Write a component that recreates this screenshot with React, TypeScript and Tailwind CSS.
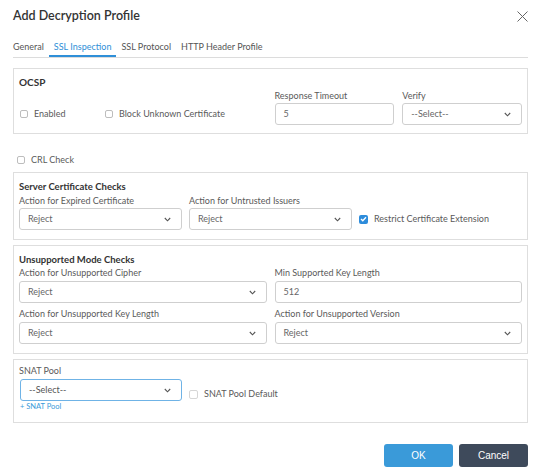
import React from "react";

const Chevron = () => (
  <svg width="7" height="5" viewBox="0 0 7 5" fill="none">
    <path d="M0.8 1 L3.5 3.8 L6.2 1" stroke="#555" strokeWidth="1.1" />
  </svg>
);

const Box = ({ checked = false, light = false }: { checked?: boolean; light?: boolean }) =>
  checked ? (
    <span className="flex h-[9px] w-[9px] items-center justify-center rounded-[2px] bg-[#2d8cdb]">
      <svg width="7" height="6" viewBox="0 0 7 6" fill="none">
        <path d="M1 3 L2.8 4.8 L6 1.2" stroke="#fff" strokeWidth="1.3" />
      </svg>
    </span>
  ) : (
    <span
      className={
        light
          ? "block h-[9px] w-[9px] rounded-[2px] border border-[#d6d6d6] bg-white"
          : "block h-[8px] w-[8px] rounded-[2px] border border-[#bdbdbd] bg-white"
      }
    />
  );

const Label = ({ children }: { children: React.ReactNode }) => (
  <div className="text-[9px] leading-[12px] text-[#5a5a5a]">{children}</div>
);

const Select = ({ value, focus = false }: { value: string; focus?: boolean }) => (
  <div
    className={
      focus
        ? "flex h-[22px] items-center justify-between rounded-[3px] border border-[#6fb3e6] pl-[8px] pr-[10px] text-[9px] text-[#555]"
        : "flex h-[22px] items-center justify-between rounded-[3px] border border-[#cfcfcf] pl-[8px] pr-[10px] text-[9px] text-[#666]"
    }
  >
    <span>{value}</span>
    <Chevron />
  </div>
);

const Input = ({ value }: { value: string }) => (
  <div className="flex h-[22px] items-center rounded-[3px] border border-[#cfcfcf] pl-[8px] text-[9px] text-[#666]">
    {value}
  </div>
);

const Check = ({ label, checked = false, light = false }: { label: string; checked?: boolean; light?: boolean }) => (
  <div className="flex items-center gap-[6px] text-[9px] leading-[12px] text-[#5a5a5a]">
    <Box checked={checked} light={light} />
    <span>{label}</span>
  </div>
);

export default function App() {
  return (
    <div
      className="h-[476px] w-[540px] bg-white pl-[13px] pr-[12px]"
      style={{ fontFamily: "Lato, 'Open Sans', sans-serif" }}
    >
      {/* header */}
      <div className="flex h-[32px] items-center justify-between">
        <div className="text-[12.5px] font-semibold text-[#333]">Add Decryption Profile</div>
        <svg width="11" height="11" viewBox="0 0 11 11" fill="none">
          <path d="M0.5 0.5 L10.5 10.5 M10.5 0.5 L0.5 10.5" stroke="#666" strokeWidth="1" />
        </svg>
      </div>

      {/* tabs */}
      <div className="mt-[6px] flex border-b border-[#dcdcdc] text-[9px] text-[#555]">
        <div className="flex h-[19px] items-center border-b-2 border-transparent pr-[5px]">General</div>
        <div className="flex h-[19px] items-center border-b-2 border-[#2f8fd8] px-[5px] text-[#2f8fd8]">
          SSL Inspection
        </div>
        <div className="flex h-[19px] items-center border-b-2 border-transparent px-[5px]">SSL Protocol</div>
        <div className="flex h-[19px] items-center border-b-2 border-transparent px-[5px]">HTTP Header Profile</div>
      </div>

      {/* OCSP */}
      <div className="mt-[10px] border border-[#dedede] px-[5px] pb-[8px] pt-[7px]">
        <div className="text-[10px] font-bold leading-[12px] text-[#333]">OCSP</div>
        <div className="mt-[2px] grid grid-cols-2 gap-x-[8px]">
          <div className="flex items-end">
            <div className="flex h-[22px] items-center pl-[1px]">
              <div className="w-[85px]">
                <Check label="Enabled" />
              </div>
              <Check label="Block Unknown Certificate" />
            </div>
          </div>
          <div className="grid grid-cols-2 gap-x-[8px]">
            <div>
              <Label>Response Timeout</Label>
              <div className="mt-[1px]">
                <Input value="5" />
              </div>
            </div>
            <div>
              <Label>Verify</Label>
              <div className="mt-[1px]">
                <Select value="--Select--" />
              </div>
            </div>
          </div>
        </div>
      </div>

      {/* CRL */}
      <div className="mt-[20px] pl-[4px]">
        <Check label="CRL Check" />
      </div>

      {/* Server Certificate Checks */}
      <div className="mt-[6px] border border-[#dedede] px-[5px] pb-[9px] pt-[8px]">
        <div className="text-[9.5px] font-bold leading-[12px] text-[#333]">Server Certificate Checks</div>
        <div className="mt-[2px] grid grid-cols-3 gap-x-[7px]">
          <div>
            <Label>Action for Expired Certificate</Label>
            <div className="mt-[1px]">
              <Select value="Reject" />
            </div>
          </div>
          <div>
            <Label>Action for Untrusted Issuers</Label>
            <div className="mt-[1px]">
              <Select value="Reject" />
            </div>
          </div>
          <div className="flex items-end">
            <div className="flex h-[22px] items-center">
              <Check label="Restrict Certificate Extension" checked />
            </div>
          </div>
        </div>
      </div>

      {/* Unsupported Mode Checks */}
      <div className="mt-[5px] border border-[#dedede] px-[5px] pb-[9px] pt-[8px]">
        <div className="text-[9.5px] font-bold leading-[12px] text-[#333]">Unsupported Mode Checks</div>
        <div className="mt-[1px] grid grid-cols-2 gap-x-[8px] gap-y-[5px]">
          <div>
            <Label>Action for Unsupported Cipher</Label>
            <div className="mt-[2px]">
              <Select value="Reject" />
            </div>
          </div>
          <div>
            <Label>Min Supported Key Length</Label>
            <div className="mt-[2px]">
              <Input value="512" />
            </div>
          </div>
          <div>
            <Label>Action for Unsupported Key Length</Label>
            <div className="mt-[2px]">
              <Select value="Reject" />
            </div>
          </div>
          <div>
            <Label>Action for Unsupported Version</Label>
            <div className="mt-[2px]">
              <Select value="Reject" />
            </div>
          </div>
        </div>
      </div>

      {/* SNAT */}
      <div className="mt-[5px] border border-[#dedede] px-[5px] pb-[9px] pt-[5px]">
        <div className="grid grid-cols-3 gap-x-[7px]">
          <div>
            <Label>SNAT Pool</Label>
            <div className="mt-[2px] pl-[1px]">
              <Select value="--Select--" focus />
            </div>
            <div className="pl-[1px] text-[7.5px] leading-[12px] text-[#3a9ad9]">+ SNAT Pool</div>
          </div>
          <div className="pt-[23px]">
            <Check label="SNAT Pool Default" light />
          </div>
        </div>
      </div>

      {/* buttons */}
      <div
        className="mt-[21px] flex justify-end gap-[6px] text-[10px]"
        style={{ fontFamily: "'Liberation Sans', Arial, sans-serif" }}
      >
        <button className="flex h-[23px] w-[69px] items-center justify-center rounded-[3px] bg-[#3a9ad9] text-white">
          OK
        </button>
        <button className="flex h-[23px] w-[69px] items-center justify-center rounded-[3px] bg-[#3e4a5b] text-white">
          Cancel
        </button>
      </div>
    </div>
  );
}
